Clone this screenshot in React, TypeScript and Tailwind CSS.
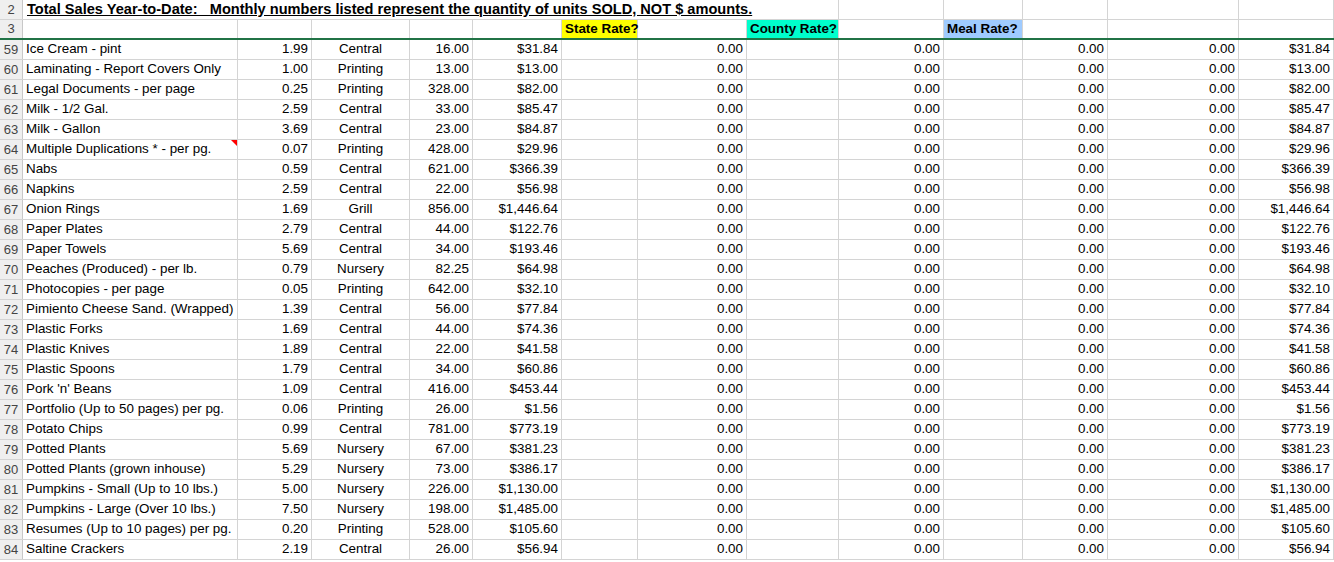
const W = [23, 215, 74, 98, 63, 89, 76, 109, 92, 105, 79, 85, 131, 95];
const rows: [number, string, string, string, string, string][] = [
  [59, "Ice Cream - pint", "1.99", "Central", "16.00", "$31.84"],
  [60, "Laminating - Report Covers Only", "1.00", "Printing", "13.00", "$13.00"],
  [61, "Legal Documents - per page", "0.25", "Printing", "328.00", "$82.00"],
  [62, "Milk - 1/2 Gal.", "2.59", "Central", "33.00", "$85.47"],
  [63, "Milk - Gallon", "3.69", "Central", "23.00", "$84.87"],
  [64, "Multiple Duplications * - per pg.", "0.07", "Printing", "428.00", "$29.96"],
  [65, "Nabs", "0.59", "Central", "621.00", "$366.39"],
  [66, "Napkins", "2.59", "Central", "22.00", "$56.98"],
  [67, "Onion Rings", "1.69", "Grill", "856.00", "$1,446.64"],
  [68, "Paper Plates", "2.79", "Central", "44.00", "$122.76"],
  [69, "Paper Towels", "5.69", "Central", "34.00", "$193.46"],
  [70, "Peaches (Produced) - per lb.", "0.79", "Nursery", "82.25", "$64.98"],
  [71, "Photocopies - per page", "0.05", "Printing", "642.00", "$32.10"],
  [72, "Pimiento Cheese Sand. (Wrapped)", "1.39", "Central", "56.00", "$77.84"],
  [73, "Plastic Forks", "1.69", "Central", "44.00", "$74.36"],
  [74, "Plastic Knives", "1.89", "Central", "22.00", "$41.58"],
  [75, "Plastic Spoons", "1.79", "Central", "34.00", "$60.86"],
  [76, "Pork 'n' Beans", "1.09", "Central", "416.00", "$453.44"],
  [77, "Portfolio (Up to 50 pages) per pg.", "0.06", "Printing", "26.00", "$1.56"],
  [78, "Potato Chips", "0.99", "Central", "781.00", "$773.19"],
  [79, "Potted Plants", "5.69", "Nursery", "67.00", "$381.23"],
  [80, "Potted Plants (grown inhouse)", "5.29", "Nursery", "73.00", "$386.17"],
  [81, "Pumpkins - Small (Up to 10 lbs.)", "5.00", "Nursery", "226.00", "$1,130.00"],
  [82, "Pumpkins - Large (Over 10 lbs.)", "7.50", "Nursery", "198.00", "$1,485.00"],
  [83, "Resumes (Up to 10 pages) per pg.", "0.20", "Printing", "528.00", "$105.60"],
  [84, "Saltine Crackers", "2.19", "Central", "26.00", "$56.94"],
];

function Cell({ i, children, cls = "" }: { i: number; children?: React.ReactNode; cls?: string }) {
  return (
    <div
      className={`relative shrink-0 h-full border-r border-[#d4d4d4] px-[3px] flex items-center overflow-visible whitespace-nowrap ${cls}`}
      style={{ width: W[i] }}
    >
      {children}
    </div>
  );
}

function RowNum({ n }: { n: number }) {
  return (
    <div className="shrink-0 h-full bg-[#efefef] border-r border-[#c8c8c8] text-[#444] flex items-center justify-center text-[13px]" style={{ width: W[0] }}>
      {n}
    </div>
  );
}

export default function App() {
  return (
    <div className="w-[1334px] h-[562px] overflow-hidden bg-white text-black text-[13.4px]" style={{ fontFamily: '"Liberation Sans", Arial, sans-serif' }}>
      <div className="flex h-[20px] border-b border-[#d4d4d4]">
        <RowNum n={2} />
        <div className="flex-1 relative flex">
          <div className="absolute left-[4px] top-0 h-full flex items-center font-bold underline text-[14.6px] whitespace-nowrap z-10">
            Total Sales Year-to-Date:&nbsp;&nbsp;&nbsp;Monthly numbers listed represent the quantity of units SOLD, NOT $ amounts.
          </div>
          {W.slice(1).map((_, k) => (
            <Cell key={k} i={k + 1} cls={k + 1 <= 7 ? "border-r-transparent" : ""} />
          ))}
        </div>
      </div>
      <div className="flex h-[20px] border-b-2 border-[#217346]">
        <RowNum n={3} />
        {W.slice(1).map((_, k) => {
          const i = k + 1;
          let content: React.ReactNode = null;
          if (i === 6) { content = <span className="bg-[#ffff00] font-bold h-full flex items-center px-[3px] -mx-[3px] w-[calc(100%+6px)]">State Rate?</span>; }
          if (i === 8) { content = <span className="bg-[#00ffcc] font-bold h-full flex items-center px-[3px] -mx-[3px] w-[calc(100%+6px)]">County Rate?</span>; }
          if (i === 10) { content = <span className="bg-[#9fcbff] font-bold h-full flex items-center px-[3px] -mx-[3px] w-[calc(100%+6px)]">Meal Rate?</span>; }
          return <Cell key={i} i={i}>{content}</Cell>;
        })}
      </div>
      {rows.map((r) => (
        <div key={r[0]} className="flex h-[20px] border-b border-[#d4d4d4]">
          <RowNum n={r[0]} />
          <Cell i={1}>
            {r[1]}
            {r[0] === 64 && (
              <div className="absolute right-0 top-0 w-0 h-0 border-t-[6px] border-l-[6px] border-t-[#ff0000] border-l-transparent" />
            )}
          </Cell>
          <Cell i={2} cls="justify-end">{r[2]}</Cell>
          <Cell i={3} cls="justify-center">{r[3]}</Cell>
          <Cell i={4} cls="justify-end">{r[4]}</Cell>
          <Cell i={5} cls="justify-end">{r[5]}</Cell>
          <Cell i={6} />
          <Cell i={7} cls="justify-end">0.00</Cell>
          <Cell i={8} />
          <Cell i={9} cls="justify-end">0.00</Cell>
          <Cell i={10} />
          <Cell i={11} cls="justify-end">0.00</Cell>
          <Cell i={12} cls="justify-end">0.00</Cell>
          <Cell i={13} cls="justify-end">{r[5]}</Cell>
        </div>
      ))}
    </div>
  );
}
